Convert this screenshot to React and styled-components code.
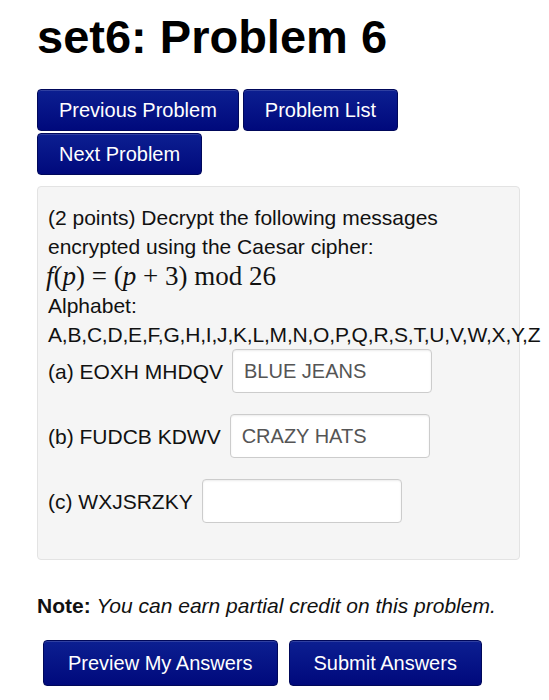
import React from 'react'
import styled, { createGlobalStyle } from 'styled-components'

const GlobalStyle = createGlobalStyle`
  body {
    margin: 0;
    background: #fff;
    font-family: "Liberation Sans", Arial, sans-serif;
    color: #111;
  }
`

const Page = styled.div`
  padding: 11px 0 0 37px;
  width: 512px;
`

const Title = styled.h1`
  margin: 0;
  font-size: 47px;
  font-weight: bold;
  line-height: 52px;
  color: #000;
`

const NavBar = styled.div`
  display: flex;
  flex-wrap: wrap;
  gap: 2px 4px;
  margin-top: 26px;
  width: 380px;
`

const Button = styled.button`
  font-family: "Liberation Sans", Arial, sans-serif;
  font-size: 20px;
  color: #fff;
  height: ${(p) => p.$h || 42}px;
  padding: 0 ${(p) => p.$px || 21}px;
  border: 1px solid #00085a;
  border-radius: 4px;
  background: linear-gradient(#0c1f91, #00097c);
  box-shadow: inset 0 1px 0 rgba(255, 255, 255, 0.15);
`

const Well = styled.div`
  margin-top: 11px;
  width: 461px;
  min-height: 356px;
  padding: 16px 10px 0 10px;
  background: #f5f5f5;
  border: 1px solid #e3e3e3;
  border-radius: 4px;
  font-size: 21px;
  line-height: 29px;
`

const Text = styled.div`
  white-space: nowrap;
  letter-spacing: ${(p) => p.$ls || 0}px;
`

const Formula = styled.div`
  font-family: "Liberation Serif", "Times New Roman", serif;
  font-size: 27px;
  line-height: 30px;
  margin-left: -2px;
  white-space: nowrap;

  i {
    font-style: italic;
  }
`

const Row = styled.div`
  display: flex;
  align-items: center;
  gap: 9px;
  margin-top: ${(p) => p.$mt ?? 21}px;
`

const Field = styled.input`
  box-sizing: border-box;
  width: 200px;
  height: 44px;
  padding: 0 11px;
  font-family: "Liberation Sans", Arial, sans-serif;
  font-size: 20px;
  color: #555;
  background: #fff;
  border: 1px solid #ccc;
  border-radius: 4px;
  box-shadow: inset 0 1px 2px rgba(0, 0, 0, 0.08);
`

const Note = styled.p`
  margin: 34px 0 0;
  font-size: 21px;
  line-height: 24px;

  b {
    font-weight: bold;
  }
  i {
    font-style: italic;
  }
`

const Actions = styled.div`
  display: flex;
  gap: 11px;
  margin: 22px 0 0 6px;
`

const rows = [
  { label: '(a) EOXH MHDQV', value: 'BLUE JEANS', mt: 0 },
  { label: '(b) FUDCB KDWV', value: 'CRAZY HATS' },
  { label: '(c) WXJSRZKY', value: '' },
]

export default function App() {
  return (
    <Page>
      <GlobalStyle />
      <Title>set6: Problem 6</Title>
      <NavBar>
        <Button>Previous Problem</Button>
        <Button>Problem List</Button>
        <Button>Next Problem</Button>
      </NavBar>
      <Well>
        <Text>(2 points) Decrypt the following messages</Text>
        <Text>encrypted using the Caesar cipher:</Text>
        <Formula>
          <i>f</i>(<i>p</i>) = (<i>p</i> + 3) mod 26
        </Formula>
        <Text>Alphabet:</Text>
        <Text $ls={-0.2}>A,B,C,D,E,F,G,H,I,J,K,L,M,N,O,P,Q,R,S,T,U,V,W,X,Y,Z</Text>
        {rows.map((r) => (
          <Row key={r.label} $mt={r.mt}>
            <span>{r.label}</span>
            <Field defaultValue={r.value} />
          </Row>
        ))}
      </Well>
      <Note>
        <b>Note:</b> <i>You can earn partial credit on this problem.</i>
      </Note>
      <Actions>
        <Button $h={46} $px={24}>Preview My Answers</Button>
        <Button $h={46} $px={24}>Submit Answers</Button>
      </Actions>
    </Page>
  )
}
